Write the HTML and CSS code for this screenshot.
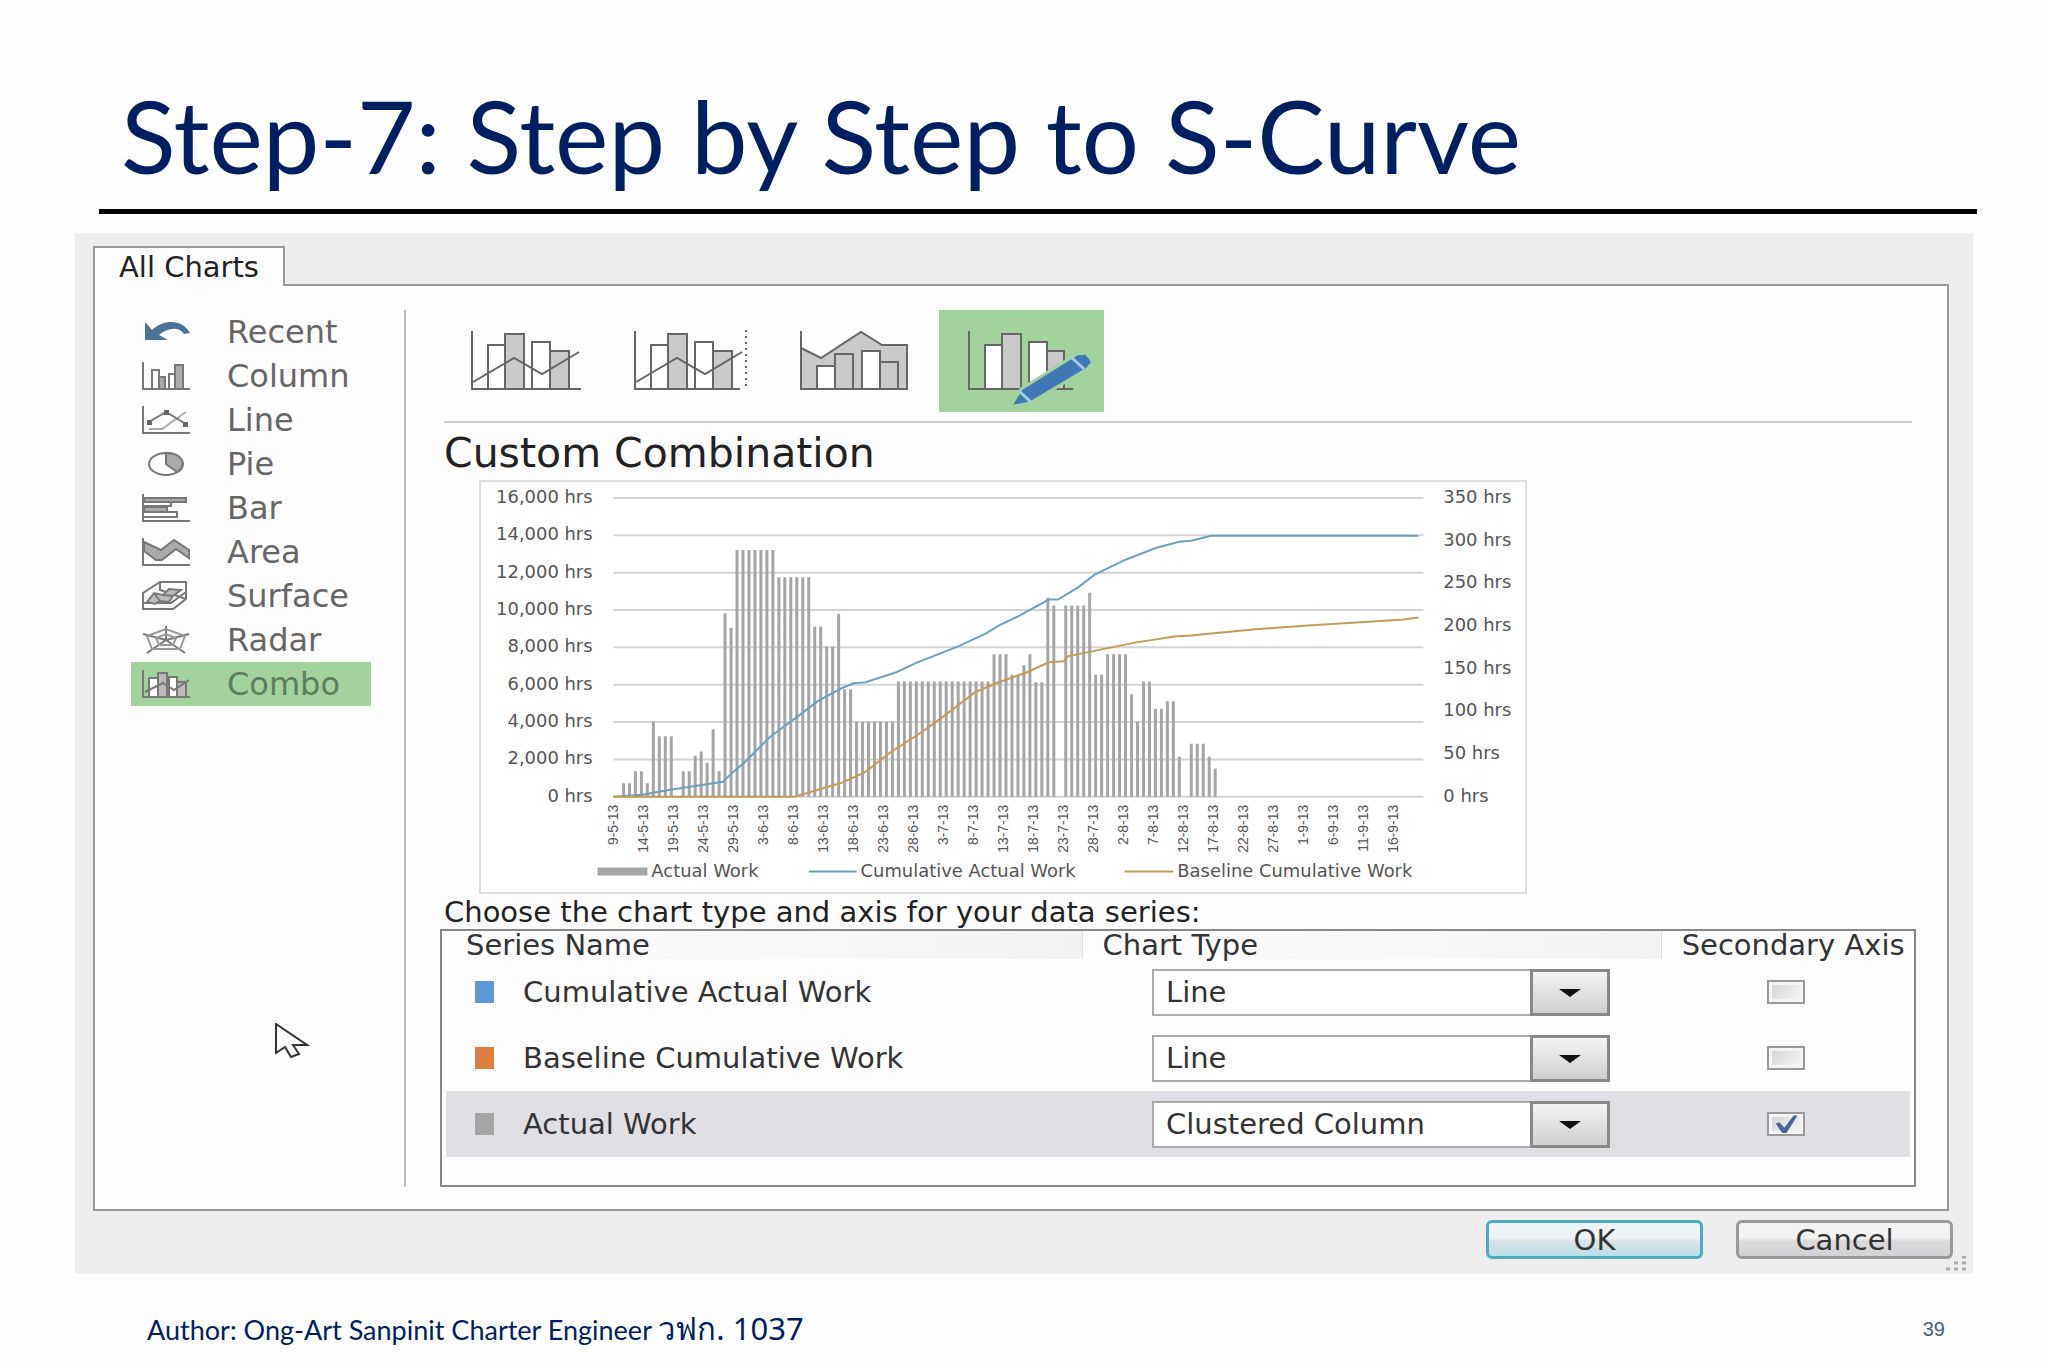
FILE: index.html
```
<!DOCTYPE html>
<html lang="en">
<head>
<meta charset="UTF-8" />
<title>Step-7: Step by Step to S-Curve</title>
<link rel="stylesheet" href="styles.css">
</head>
<body>
<header class="slide-header">
  <h1>Step-7: Step by Step to S-Curve</h1>
</header>

<main class="dialog">
  <div class="tabs"><button class="tab" type="button">All Charts</button></div>

  <div class="panel">
    <nav class="chart-list">
      <button type="button"><svg class="icon" viewBox="0 0 50 30"><path d="M4 5v18h23l-9-5c8-7 20-9 25-1l6-1C42 3 24 1 11 13z" fill="#4d7298"/></svg>Recent</button>
      <button type="button"><svg class="icon" viewBox="0 0 50 30"><path d="M2 1v27h47M11 28V9h7v19M28 28V13h6"/><path d="M18 28V16h6v12zM34 28V4h8v24z" fill="#aaa"/></svg>Column</button>
      <button type="button"><svg class="icon" viewBox="0 0 50 30"><path d="M2 1v27h47"/><path d="M8 24h13L45 7" stroke="#aaa"/><path d="M8 17l17-10 20 12"/><path d="M6 15h5v5H6zM23 5h5v5h-5zM42 17h5v5h-5z" fill="#666" stroke="none"/></svg>Line</button>
      <button type="button"><svg class="icon" viewBox="0 0 50 30"><ellipse cx="25" cy="15" rx="17" ry="11"/><path d="M25 4v11l11 8c11-7 5-19-11-19z" fill="#aaa"/></svg>Pie</button>
      <button type="button"><svg class="icon" viewBox="0 0 50 30"><path d="M2 1v27h47M3 9h27v4H3M3 19h33v5H3"/><path d="M3 5h42v4H3zM3 14h23v5H3z" fill="#aaa"/></svg>Bar</button>
      <button type="button"><svg class="icon" viewBox="0 0 50 30"><path d="M3 5l17 8L33 3l15 10v8L35 12l-14 11H15L3 14z" fill="#aaa"/><path d="M2 1v27h47"/></svg>Area</button>
      <button type="button"><svg class="icon" viewBox="0 0 50 30"><path d="M2 28V12L19 1h26v17L32 28zM2 22h28l15-11M19 1v8l26 9"/><path d="M6 21l7-9 9 2 6-6 12 1-8 6-4 6-9-1-5 3zM13 12l6 8M22 14l10 1" fill="#bbb"/></svg>Surface</button>
      <button type="button"><svg class="icon" viewBox="0 0 50 30"><path d="M25 15V1M25 15L2 9M25 15l23-6M25 15L6 28M25 15l19 13"/><path d="M25 4L6 11l5 13h28l5-13zM25 9l-10 4 3 7h14l3-7z" stroke="#999"/></svg>Radar</button>
      <button type="button" class="selected"><svg class="icon" viewBox="0 0 50 30"><path d="M8 28V9h9v19zM28 28V8h8v20z" fill="#fff"/><path d="M17 28V4h9v24zM36 28V13h9v15z" fill="#bcb8bc"/><path d="M2 1v27h47M4 23l18-9 11 7 15-10"/></svg>Combo</button>
    </nav>

    <section class="content">
      <div class="types">
        <button type="button" aria-label="Clustered Column - Line">
          <svg viewBox="0 0 165 102"><path d="M44 79V35h17v44zM88 79V32h18v47z" fill="#fff"/><path d="M61 79V24h19v55zM106 79V41h19v38z" fill="#cbc9cb"/><path d="M28 21v58h109M29 72l41-24 28 16 37-22"/></svg>
        </button>
        <button type="button" aria-label="Clustered Column - Line on Secondary Axis">
          <svg viewBox="0 0 165 102"><path d="M42 79V35h17v44zM86 79V32h18v47z" fill="#fff"/><path d="M59 79V24h19v55zM104 79V41h19v38z" fill="#cbc9cb"/><path d="M26 21v58h105M27 72l41-24 28 16 37-22"/><path d="M137 20v60" stroke-dasharray="2 4"/></svg>
        </button>
        <button type="button" aria-label="Stacked Area - Clustered Column">
          <svg viewBox="0 0 165 102"><path d="M27 38l20 10 40-26 21 13h25v44H27z" fill="#cbc9cb"/><path d="M43 79V56h18v23zM88 79V41h18v38z" fill="#fff"/><path d="M61 79V44h18v35zM106 79V52h18v27z" fill="#cbc9cb"/><path d="M27 21v58h106"/></svg>
        </button>
        <button type="button" class="selected" aria-label="Custom Combination">
          <svg viewBox="0 0 165 102"><path d="M46 79V35h17v44zM90 79V32h18v47z" fill="#fff"/><path d="M63 79V24h19v55zM108 79V41h17v38z" fill="#cbc9cb"/><path d="M30 21v58h104"/><path d="M71 97l11-18 56-35 9-1 7 9-6 7-57 34z" fill="#3f78b5" stroke="#a3d39c" stroke-width="3"/><path d="M80 81l13 12M132 47l13 12" stroke="#a9cbe6" stroke-width="3"/></svg>
        </button>
      </div>

      <h2>Custom Combination</h2>

      <svg class="chart" id="chart" viewBox="0 0 1048 412" role="img" aria-label="Custom Combination preview">
        <g id="grid" class="grid"></g>
        <path id="bars" class="bars" />
        <polyline class="actual" points="133,316 162,314 190,309 210,306 243,301 252,292 265,281 290,256 317,236 338,220 362,207 374,202 386,201 417,191 438,181 479,165 507,152 520,144 541,134 570,118 579,118 599,106 616,93 647,78 678,66 701,60 713,59 733,54 941,54" />
        <polyline class="baseline" points="133,316 315,316 338,309 362,302 386,291 410,272 438,254 462,237 496,211 520,201 548,191 570,181 585,180 589,175 623,168 658,161 696,155 713,154 733,152 775,148 830,144 895,140 926,138 941,136" />
        <g id="labels"></g>
        <rect x="117" y="387" width="50" height="8" fill="#a5a5a5" />
        <path class="actual" d="M329 391h48" />
        <path class="baseline" d="M646 391h49" />
        <text x="171" y="397">Actual Work</text>
        <text x="381" y="397">Cumulative Actual Work</text>
        <text x="699" y="397">Baseline Cumulative Work</text>
      </svg>

      <p class="hint">Choose the chart type and axis for your data series:</p>

      <div class="series-box">
        <table class="series">
          <colgroup><col class="col-name"><col class="col-type"><col class="col-axis"></colgroup>
          <thead>
            <tr><th>Series Name</th><th>Chart Type</th><th>Secondary Axis</th></tr>
          </thead>
          <tbody>
            <tr>
              <td><span class="name"><i class="swatch blue"></i>Cumulative Actual Work</span></td>
              <td><span class="dropdown"><select aria-label="Cumulative Actual Work chart type"><option>Line</option><option>Clustered Column</option></select></span></td>
              <td><input type="checkbox" aria-label="Cumulative Actual Work secondary axis"></td>
            </tr>
            <tr>
              <td><span class="name"><i class="swatch orange"></i>Baseline Cumulative Work</span></td>
              <td><span class="dropdown"><select aria-label="Baseline Cumulative Work chart type"><option>Line</option><option>Clustered Column</option></select></span></td>
              <td><input type="checkbox" aria-label="Baseline Cumulative Work secondary axis"></td>
            </tr>
            <tr class="selected">
              <td><span class="name"><i class="swatch gray"></i>Actual Work</span></td>
              <td><span class="dropdown"><select aria-label="Actual Work chart type"><option>Clustered Column</option><option>Line</option></select></span></td>
              <td><input type="checkbox" checked aria-label="Actual Work secondary axis"></td>
            </tr>
          </tbody>
        </table>
      </div>
    </section>

    <svg class="cursor" viewBox="0 0 36 36"><path d="M2 1v29l9-6 6 10 8-3-6-9h14z" fill="#fff" stroke="#333" stroke-width="2"/></svg>
  </div>

  <div class="actions">
    <button type="button" class="ok">OK</button>
    <button type="button">Cancel</button>
  </div>
  <svg class="grip" viewBox="0 0 24 16"><path d="M17 1h4M9 7h4M17 7h4M1 13h4M9 13h4M17 13h4" stroke="#aaa" stroke-width="3"/></svg>
</main>

<footer class="slide-footer">
  <p>Author: Ong-Art Sanpinit Charter Engineer <span class="licence" lang="th">วฟก. 1037</span></p>
  <span class="page">39</span>
</footer>

<script src="script.js"></script>
</body>
</html>
```

FILE: styles.css
```
*, *::before { box-sizing: border-box; }
body { margin: 0; background: #fefefe; font-family: "DejaVu Sans", sans-serif; font-size: 29px; color: #333; }
button { font: inherit; color: inherit; border: none; background: none; padding: 0; }

.slide-header { margin: 0 71px 19px 99px; padding: 76px 22px 15px; border-bottom: 5px solid #000; }
.slide-header h1 { margin: 0; font: 400 101px/118px Lato, sans-serif; color: #001f60; }

.dialog { position: relative; margin: 0 75px; padding: 13px 24px 15px 18px; background: #efeeef; }
.tabs { display: flex; }
.tab { position: relative; z-index: 1; width: 192px; height: 40px; margin-bottom: -2px; border: 2px solid #999; border-bottom: none; background: #fefdfe; color: #222; text-align: center; }
.panel { position: relative; display: flex; padding: 24px 31px 22px 36px; border: 2px solid #999; background: #fefdfe; }

.chart-list { width: 275px; padding: 0 33px 0 0; border-right: 2px solid #bbb; }
.chart-list button { display: flex; align-items: center; gap: 36px; width: 100%; height: 44px; padding: 0 0 0 10px; color: #666; font-size: 32px; }
.icon { width: 50px; height: 30px; fill: none; stroke: #777; stroke-width: 2; flex: none; }
.icon path[fill="#4d7298"] { stroke: none; }
.chart-list .selected, .types .selected { background: #a3d39c; }
.chart-list .selected { color: #5b7d5c; }

.content { flex: 1; min-width: 0; padding-left: 38px; }
.types { display: flex; margin: 0 4px 0 0; padding-bottom: 9px; border-bottom: 2px solid #ccc; }
.types button { width: 165px; height: 102px; }
.types svg { display: block; width: 100%; fill: none; stroke: #666; stroke-width: 2; }
h2 { margin: 9px 0 6px; font-size: 41px; line-height: 42px; font-weight: 400; color: #222; }

.chart { display: block; width: 1048px; max-width: 100%; margin-left: 35px; border: 2px solid #ddd; background: #fff; }
.chart text { font-size: 18px; fill: #555; }
.chart .date { font: 14px "Liberation Sans", sans-serif; }
.grid { stroke: #d4d2d4; stroke-width: 2; }
.bars { stroke: #a5a5a5; stroke-width: 3; }
.actual, .baseline { fill: none; stroke-width: 2; }
.actual { stroke: #6ca0bd; }
.baseline { stroke: #c49b54; }

.hint { margin: 2px 0 1px; line-height: 32px; color: #222; }
.series-box { height: 258px; margin-left: -4px; padding: 0 4px; border: 2px solid #888; }
.series { width: 100%; table-layout: fixed; border-collapse: collapse; }
.col-name { width: 636px; }
.col-axis { width: 17%; }
.series th { height: 28px; padding: 0 0 0 20px; font-weight: 400; line-height: 28px; text-align: left; white-space: nowrap; background: linear-gradient(90deg, #fefdfe, #f1f2f4); }
.series th + th { border-left: 1px solid #ddd; }
.series th:last-child { background: none; }
.series td { height: 66px; padding: 0; }
.series td:nth-child(2) { padding-left: 70px; }
.series td:last-child { text-align: center; }
.series tr.selected { background: #e0dfe3; }
.name { display: flex; align-items: center; gap: 29px; padding-left: 29px; }
.swatch { width: 19px; height: 22px; }
.blue { background: #5b9bd5; }
.orange { background: #dd7f3f; }
.gray { background: #a5a5a5; }

.dropdown { position: relative; display: block; width: 458px; }
.dropdown select { display: block; appearance: none; width: 100%; height: 47px; padding: 0 80px 0 12px; border: 2px solid #aaa; border-radius: 0; background: #fff; color: #333; font: inherit; }
/* arrow button at the right end of the select */
.dropdown::before { content: ""; position: absolute; right: 0; top: 0; width: 80px; height: 47px; border: 3px solid #888; background: linear-gradient(#f4f4f4, #cfcfd1); pointer-events: none; }
.dropdown::after { content: ""; position: absolute; right: 29px; top: 20px; border: 11px solid transparent; border-top: 8px solid #111; border-bottom: none; pointer-events: none; }
input[type="checkbox"] { appearance: none; position: relative; display: block; width: 38px; height: 24px; margin: 0 auto; border: 2px solid #999; background: linear-gradient(135deg, #d2d2d4, #f8f8f8); box-shadow: inset 0 0 0 3px #f4f4f4; }
input[type="checkbox"]:checked::after { content: ""; position: absolute; left: 7px; top: 1px; width: 22px; height: 18px; background: #4a6796; clip-path: polygon(0 45%, 18% 38%, 40% 68%, 82% 0, 100% 0, 48% 100%, 32% 100%); }

.actions { display: flex; justify-content: flex-end; gap: 33px; margin-top: 9px; margin-right: -4px; }
.actions button { width: 217px; height: 39px; border: 3px solid #999; border-radius: 6px; background: linear-gradient(#f3f3f3 45%, #dadadb 55%, #d3d3d5); color: #333; line-height: 32px; }
.actions .ok { border-color: #4cacbf; background: linear-gradient(#eef4f6 45%, #dbe2e6 55%, #b9dfea); }
.grip { position: absolute; right: 4px; bottom: 2px; width: 24px; height: 16px; }
.cursor { position: absolute; left: 179px; top: 737px; width: 36px; height: 36px; }

.slide-footer { display: flex; justify-content: space-between; align-items: center; margin: 34px 103px 0 147px; font: 27px/40px Lato, sans-serif; color: #001f60; }
.slide-footer p { margin: 0; }
.licence { font-family: "Noto Sans", "DejaVu Sans", sans-serif; font-size: 31px; }
.page { font-size: 20px; font-family: "Liberation Sans", sans-serif; color: #4a5f8c; }
```

FILE: script.js
```
const svgNS = 'http://www.w3.org/2000/svg';
const base = 316;
const plotHeight = 300;

// daily actual work in hours, starting 10-5-13
const work = [
  16, 16, 30, 30, 16, 88, 71, 71, 71, 0, 30, 30, 48, 53, 40, 79, 30, 215, 198,
  289, 289, 289, 289, 289, 289, 289, 257, 257, 257, 257, 257, 257, 199, 199, 176, 176, 214,
  126, 126, 88, 88, 88, 88, 88, 88, 88,
  135, 135, 135, 135, 135, 135, 135, 135, 135, 135, 135, 135, 135, 135, 135, 135,
  167, 167, 167, 143, 143, 154, 167, 134, 134, 233, 224, 0, 224, 224, 224, 224, 239,
  143, 143, 167, 167, 167, 167, 120, 88, 135, 135, 103, 103, 112, 112, 47, 0,
  62, 62, 62, 47, 33
];
const dates = ['9-5-13', '14-5-13', '19-5-13', '24-5-13', '29-5-13', '3-6-13', '8-6-13', '13-6-13', '18-6-13',
  '23-6-13', '28-6-13', '3-7-13', '8-7-13', '13-7-13', '18-7-13', '23-7-13', '28-7-13', '2-8-13', '7-8-13',
  '12-8-13', '17-8-13', '22-8-13', '27-8-13', '1-9-13', '6-9-13', '11-9-13', '16-9-13'];

function add(parent, tag, attrs, text) {
  const el = document.createElementNS(svgNS, tag);
  for (const key in attrs) el.setAttribute(key, attrs[key]);
  if (text) el.textContent = text;
  document.getElementById(parent).appendChild(el);
}

for (let i = 0; i <= 8; i++) {
  const y = base - i * plotHeight / 8;
  add('grid', 'path', { d: `M133 ${y}H946` });
  add('labels', 'text', { x: 112, y: y + 5, 'text-anchor': 'end' }, (i * 2000).toLocaleString('en-US') + ' hrs');
}

for (let i = 0; i <= 7; i++) {
  const y = base - i * plotHeight / 7;
  add('labels', 'text', { x: 966, y: y + 5 }, i * 50 + ' hrs');
}

dates.forEach((date, i) => {
  const x = 138 + i * 30.1;
  add('labels', 'text', { class: 'date', 'text-anchor': 'end', transform: `translate(${x} 324) rotate(-90)` }, date);
});

document.getElementById('bars').setAttribute('d', work.map((hours, i) =>
  hours ? `M${143 + i * 6} ${base}V${base - hours * plotHeight / 350}` : '').join(''));
```
